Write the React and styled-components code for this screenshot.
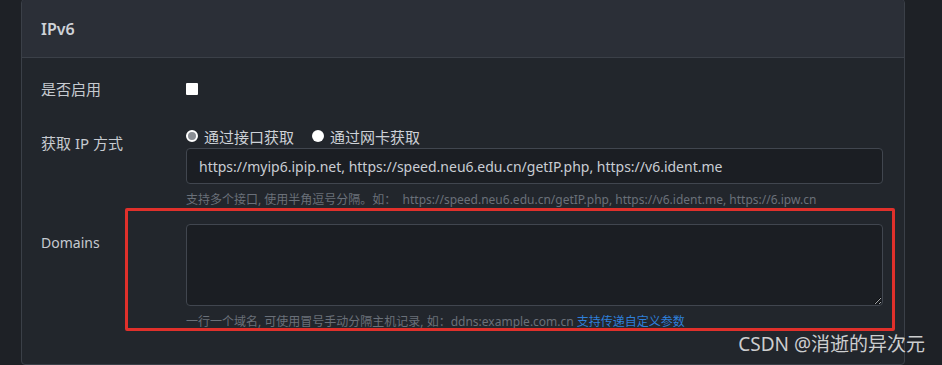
import styled, { createGlobalStyle } from "styled-components";

const GlobalStyle = createGlobalStyle`
    html, body {
        margin: 0;
        padding: 0;
        background: #1e2126;
    }
    * {
        box-sizing: border-box;
    }
`;

const FONT = `"Noto Sans", "Noto Sans CJK SC", sans-serif`;

function App() {
    return (
        <Page>
            <GlobalStyle />
            <Card>
                <CardHeader>IPv6</CardHeader>
                <CardBody>
                    <Row gap={27}>
                        <Label cjk={true}>是否启用</Label>
                        <Control>
                            <CheckWrap>
                                <CheckBox />
                            </CheckWrap>
                        </Control>
                    </Row>
                    <Row gap={16}>
                        <Label cjk={true}>获取 IP 方式</Label>
                        <Control>
                            <RadioLine>
                                <RadioItem>
                                    <Radio checked={true} />
                                    通过接口获取
                                </RadioItem>
                                <RadioItem>
                                    <Radio />
                                    通过网卡获取
                                </RadioItem>
                            </RadioLine>
                            <Input
                                readOnly
                                value="https://myip6.ipip.net, https://speed.neu6.edu.cn/getIP.php, https://v6.ident.me"
                            />
                            <Help>
                                支持多个接口, 使用半角逗号分隔。如：&nbsp;&nbsp;https://speed.neu6.edu.cn/getIP.php, https://v6.ident.me, https://6.ipw.cn
                            </Help>
                        </Control>
                    </Row>
                    <Row gap={0}>
                        <Label pt={9}>Domains</Label>
                        <Control>
                            <TextArea />
                            <Help>
                                一行一个域名, 可使用冒号手动分隔主机记录, 如：ddns:example.com.cn <HelpLink>支持传递自定义参数</HelpLink>
                            </Help>
                        </Control>
                        <RedMark />
                    </Row>
                </CardBody>
            </Card>
            <Watermark>CSDN @消逝的异次元</Watermark>
        </Page>
    );
}

const Page = styled.div`
    position: relative;
    height: 365px;
    overflow: hidden;
    padding: 0 37px 0 21px;
    font-family: ${FONT};
    background: #1e2126;
`;
const Card = styled.div`
    margin-top: -1px;
    border: 1px solid #3b4048;
    border-radius: 4px;
    background: #22262c;
    overflow: hidden;
`;
const CardHeader = styled.div`
    height: 58px;
    padding: 0 19px;
    display: flex;
    align-items: center;
    background: #2b2f37;
    border-bottom: 1px solid #3b4048;
    color: #ced2d8;
    font-size: 16px;
    font-weight: 600;
`;
const CardBody = styled.div`
    padding: 14px 21px 34px 19px;
`;
const Row = styled.div`
    position: relative;
    display: grid;
    grid-template-columns: 145px 1fr;
    margin-bottom: ${props => props.gap}px;
`;
const Label = styled.div`
    padding-top: ${props => props.pt ?? 7}px;
    line-height: 20px;
    font-size: ${props => props.cjk ? 15 : 14}px;
    color: #c6cad0;
`;
const Control = styled.div`
    display: flex;
    flex-direction: column;
`;
const CheckWrap = styled.div`
    height: 27px;
    display: flex;
    align-items: flex-end;
    padding-bottom: 4px;
`;
const CheckBox = styled.span`
    width: 12px;
    height: 12px;
    background: #ffffff;
    border-radius: 1px;
`;
const RadioLine = styled.div`
    display: flex;
    gap: 18px;
    height: 20px;
    margin-bottom: 2px;
`;
const RadioItem = styled.label`
    display: flex;
    align-items: center;
    gap: 6px;
    font-size: 15px;
    color: #cdd1d7;
`;
const Radio = styled.span`
    width: 12px;
    height: 12px;
    border-radius: 50%;
    background: ${props => props.checked ? '#8a8e94' : '#ffffff'};
    border: ${props => props.checked ? '2px solid #ffffff' : 'none'};
`;
const Input = styled.input`
    height: 36px;
    width: 100%;
    padding: 0 12px;
    background: #1b1e23;
    border: 1px solid #41464f;
    border-radius: 4px;
    color: #c9cdd3;
    font-family: ${FONT};
    font-size: 14px;
    outline: none;
`;
const TextArea = styled.textarea`
    height: 82px;
    width: 100%;
    padding: 6px 12px;
    background: #1b1e23;
    border: 1px solid #41464f;
    border-radius: 4px;
    color: #c9cdd3;
    font-family: ${FONT};
    font-size: 14px;
    resize: vertical;
    outline: none;
    display: block;
`;
const Help = styled.div`
    margin-top: 8px;
    line-height: 16px;
    font-size: 12px;
    color: #6a7079;
    white-space: nowrap;
`;
const HelpLink = styled.a`
    color: #2f7fd9;
    cursor: pointer;
`;
const RedMark = styled.div`
    position: absolute;
    left: 84px;
    right: -12px;
    top: -16px;
    bottom: -1px;
    border: 3px solid #e0302b;
    border-radius: 2px;
    pointer-events: none;
`;
const Watermark = styled.div`
    position: absolute;
    right: 17px;
    bottom: 8px;
    font-family: "Noto Sans", "Noto Sans CJK SC", sans-serif;
    font-size: 19px;
    color: rgba(255, 255, 255, 0.78);
`;

export default App;
